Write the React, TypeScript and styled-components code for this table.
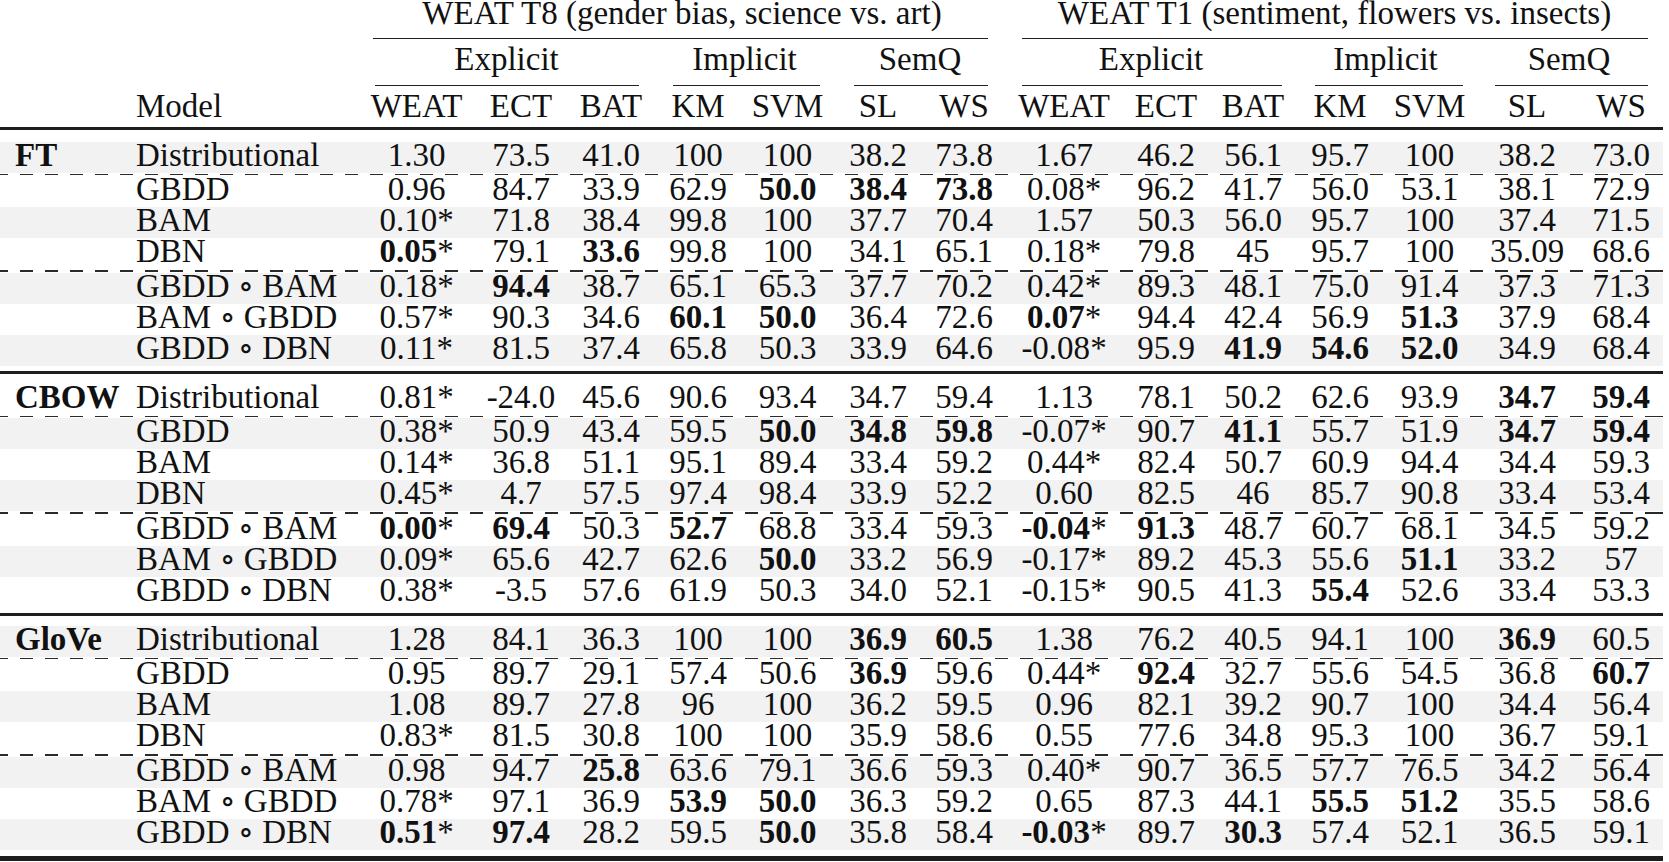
import React from "react";
import styled, { createGlobalStyle } from "styled-components";

const GlobalStyle = createGlobalStyle`
  html, body {
    margin: 0;
    padding: 0;
    background: #ffffff;
  }
  body {
    font-family: "Liberation Serif", "Times New Roman", "DejaVu Serif", serif;
    color: #111111;
  }
`;

// column widths: group, model, then 2 x (WEAT ECT BAT KM SVM SL WS)
const COLUMNS =
  "122px 236px 117px 92px 88px 86px 93px 88px 84px 116px 88px 86px 88px 91px 104px 84px";

const Table = styled.div`
  width: 1663px;
  font-size: 33px;
  line-height: 26px;
`;

const Grid = styled.div`
  display: grid;
  grid-template-columns: ${COLUMNS};
`;

const HeadRow = styled(Grid)<{ $top: number }>`
  padding-top: ${(p) => p.$top}px;
`;

const SpanCell = styled.div<{ $span: number }>`
  grid-column: span ${(p) => p.$span};
  text-align: center;
  white-space: nowrap;
`;

const CmidRule = styled.div<{ $l: number; $r: number; $gap: number }>`
  margin: ${(p) => p.$gap}px ${(p) => p.$r}px 0 ${(p) => p.$l}px;
  border-top: 1.5px solid #222;
`;

const HeadLabel = styled.div`
  text-align: center;
  white-space: nowrap;
`;

const ModelHead = styled.div`
  padding-left: 14px;
  white-space: nowrap;
`;

const Rule = styled.div<{ $h: number; $above: number; $below: number }>`
  height: ${(p) => p.$h}px;
  margin: ${(p) => p.$above}px 0 ${(p) => p.$below}px;
  background: #1e1e1e;
`;

const DataRow = styled(Grid)<{ $shade: boolean }>`
  height: 31px;
  background: ${(p) => (p.$shade ? "#f2f2f2" : "transparent")};
`;

const GroupLabel = styled.div`
  font-weight: bold;
  padding-left: 15px;
  white-space: nowrap;
`;

const ModelName = styled.div`
  padding-left: 14px;
  white-space: nowrap;
`;

const Value = styled.div`
  text-align: center;
  white-space: nowrap;
`;

const Strong = styled.b`
  font-weight: bold;
`;

const DashLine = styled.div<{ $h: number }>`
  height: ${(p) => p.$h}px;
  display: flex;
  align-items: center;

  &::after {
    content: "";
    flex: 1;
    height: 1.5px;
    background: repeating-linear-gradient(
      90deg,
      #2a2a2a 0 13px,
      transparent 13px 25px
    );
    background-position: -5px 0;
  }
`;

type Row = [string, string[]];

interface Section {
  name: string;
  rows: Row[];
}

// "!" marks a bold number, a trailing "*" stays regular
const sections: Section[] = [
  {
    name: "FT",
    rows: [
      ["Distributional", ["1.30", "73.5", "41.0", "100", "100", "38.2", "73.8", "1.67", "46.2", "56.1", "95.7", "100", "38.2", "73.0"]],
      ["GBDD", ["0.96", "84.7", "33.9", "62.9", "!50.0", "!38.4", "!73.8", "0.08*", "96.2", "41.7", "56.0", "53.1", "38.1", "72.9"]],
      ["BAM", ["0.10*", "71.8", "38.4", "99.8", "100", "37.7", "70.4", "1.57", "50.3", "56.0", "95.7", "100", "37.4", "71.5"]],
      ["DBN", ["!0.05*", "79.1", "!33.6", "99.8", "100", "34.1", "65.1", "0.18*", "79.8", "45", "95.7", "100", "35.09", "68.6"]],
      ["GBDD ∘ BAM", ["0.18*", "!94.4", "38.7", "65.1", "65.3", "37.7", "70.2", "0.42*", "89.3", "48.1", "75.0", "91.4", "37.3", "71.3"]],
      ["BAM ∘ GBDD", ["0.57*", "90.3", "34.6", "!60.1", "!50.0", "36.4", "72.6", "!0.07*", "94.4", "42.4", "56.9", "!51.3", "37.9", "68.4"]],
      ["GBDD ∘ DBN", ["0.11*", "81.5", "37.4", "65.8", "50.3", "33.9", "64.6", "-0.08*", "95.9", "!41.9", "!54.6", "!52.0", "34.9", "68.4"]],
    ],
  },
  {
    name: "CBOW",
    rows: [
      ["Distributional", ["0.81*", "-24.0", "45.6", "90.6", "93.4", "34.7", "59.4", "1.13", "78.1", "50.2", "62.6", "93.9", "!34.7", "!59.4"]],
      ["GBDD", ["0.38*", "50.9", "43.4", "59.5", "!50.0", "!34.8", "!59.8", "-0.07*", "90.7", "!41.1", "55.7", "51.9", "!34.7", "!59.4"]],
      ["BAM", ["0.14*", "36.8", "51.1", "95.1", "89.4", "33.4", "59.2", "0.44*", "82.4", "50.7", "60.9", "94.4", "34.4", "59.3"]],
      ["DBN", ["0.45*", "4.7", "57.5", "97.4", "98.4", "33.9", "52.2", "0.60", "82.5", "46", "85.7", "90.8", "33.4", "53.4"]],
      ["GBDD ∘ BAM", ["!0.00*", "!69.4", "50.3", "!52.7", "68.8", "33.4", "59.3", "!-0.04*", "!91.3", "48.7", "60.7", "68.1", "34.5", "59.2"]],
      ["BAM ∘ GBDD", ["0.09*", "65.6", "42.7", "62.6", "!50.0", "33.2", "56.9", "-0.17*", "89.2", "45.3", "55.6", "!51.1", "33.2", "57"]],
      ["GBDD ∘ DBN", ["0.38*", "-3.5", "57.6", "61.9", "50.3", "34.0", "52.1", "-0.15*", "90.5", "41.3", "!55.4", "52.6", "33.4", "53.3"]],
    ],
  },
  {
    name: "GloVe",
    rows: [
      ["Distributional", ["1.28", "84.1", "36.3", "100", "100", "!36.9", "!60.5", "1.38", "76.2", "40.5", "94.1", "100", "!36.9", "60.5"]],
      ["GBDD", ["0.95", "89.7", "29.1", "57.4", "50.6", "!36.9", "59.6", "0.44*", "!92.4", "32.7", "55.6", "54.5", "36.8", "!60.7"]],
      ["BAM", ["1.08", "89.7", "27.8", "96", "100", "36.2", "59.5", "0.96", "82.1", "39.2", "90.7", "100", "34.4", "56.4"]],
      ["DBN", ["0.83*", "81.5", "30.8", "100", "100", "35.9", "58.6", "0.55", "77.6", "34.8", "95.3", "100", "36.7", "59.1"]],
      ["GBDD ∘ BAM", ["0.98", "94.7", "!25.8", "63.6", "79.1", "36.6", "59.3", "0.40*", "90.7", "36.5", "57.7", "76.5", "34.2", "56.4"]],
      ["BAM ∘ GBDD", ["0.78*", "97.1", "36.9", "!53.9", "!50.0", "36.3", "59.2", "0.65", "87.3", "44.1", "!55.5", "!51.2", "35.5", "58.6"]],
      ["GBDD ∘ DBN", ["!0.51*", "!97.4", "28.2", "59.5", "!50.0", "35.8", "58.4", "!-0.03*", "89.7", "!30.3", "57.4", "52.1", "36.5", "59.1"]],
    ],
  },
];

const metrics = ["WEAT", "ECT", "BAT", "KM", "SVM", "SL", "WS"];

const ValueCell: React.FC<{ v: string }> = ({ v }) => {
  const bold = v.startsWith("!");
  const raw = bold ? v.slice(1) : v;
  const star = raw.endsWith("*");
  const num = star ? raw.slice(0, -1) : raw;
  return (
    <Value>
      {bold ? <Strong>{num}</Strong> : num}
      {star && "*"}
    </Value>
  );
};

const SubHeads: React.FC<{ rules: [number, number][] }> = ({ rules }) => (
  <>
    <SpanCell $span={3}>
      Explicit
      <CmidRule $l={rules[0][0]} $r={rules[0][1]} $gap={13} />
    </SpanCell>
    <SpanCell $span={2}>
      Implicit
      <CmidRule $l={rules[1][0]} $r={rules[1][1]} $gap={13} />
    </SpanCell>
    <SpanCell $span={2}>
      SemQ
      <CmidRule $l={rules[2][0]} $r={rules[2][1]} $gap={13} />
    </SpanCell>
  </>
);

export default function App() {
  let stripe = 0;

  return (
    <>
      <GlobalStyle />
      <Table>
        <HeadRow $top={0}>
          <SpanCell $span={2} />
          <SpanCell $span={7}>
            WEAT T8 (gender bias, science vs. art)
            <CmidRule $l={15} $r={18} $gap={11.5} />
          </SpanCell>
          <SpanCell $span={7}>
            WEAT T1 (sentiment, flowers vs. insects)
            <CmidRule $l={16} $r={15} $gap={11.5} />
          </SpanCell>
        </HeadRow>

        <HeadRow $top={7}>
          <SpanCell $span={2} />
          <SubHeads rules={[[17, 16], [18, 14], [20, 18]]} />
          <SubHeads rules={[[16, 14], [19, 12], [20, 15]]} />
        </HeadRow>

        <HeadRow $top={7.5}>
          <div />
          <ModelHead>Model</ModelHead>
          {[...metrics, ...metrics].map((m, i) => (
            <HeadLabel key={i}>{m}</HeadLabel>
          ))}
        </HeadRow>

        <Rule $h={3} $above={8} $below={12} />

        {sections.map((section, si) => (
          <React.Fragment key={section.name}>
            {si > 0 && <Rule $h={3} $above={5} $below={10} />}
            {section.rows.map(([model, values], ri) => {
              const shade = stripe % 2 === 0;
              stripe += 1;
              return (
                <React.Fragment key={model}>
                  <DataRow $shade={shade}>
                    <GroupLabel>{ri === 0 ? section.name : ""}</GroupLabel>
                    <ModelName>{model}</ModelName>
                    {values.map((v, vi) => (
                      <ValueCell key={vi} v={v} />
                    ))}
                  </DataRow>
                  {ri === 0 && <DashLine $h={3} />}
                  {ri === 3 && <DashLine $h={4} />}
                </React.Fragment>
              );
            })}
          </React.Fragment>
        ))}

        <Rule $h={4.5} $above={6} $below={0} />
      </Table>
    </>
  );
}
